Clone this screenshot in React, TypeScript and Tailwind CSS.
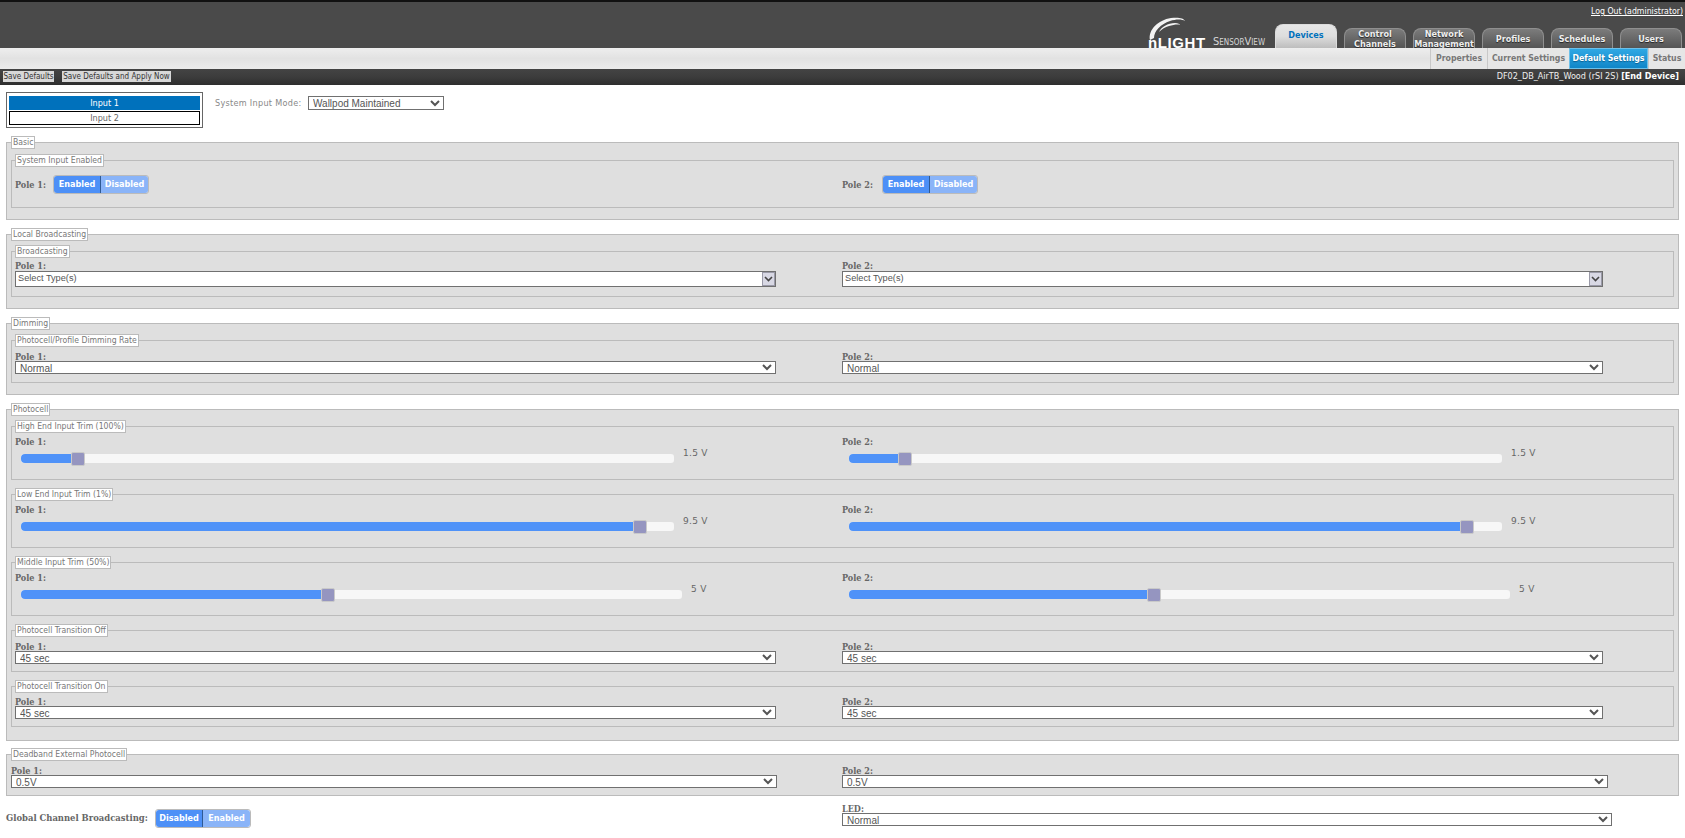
import type { ReactNode } from "react";

const serif = "[font-family:'DejaVu_Serif_Condensed','DejaVu_Serif',serif]";
const arial = "[font-family:'Liberation_Sans',Arial,sans-serif]";

const TABS = [
  { label: "Devices", active: true },
  { label: "Control Channels" },
  { label: "Network Management" },
  { label: "Profiles" },
  { label: "Schedules" },
  { label: "Users" },
];

const SUB_TABS = [
  { label: "Properties", width: 57 },
  { label: "Current Settings", width: 82 },
  { label: "Default Settings", width: 79, active: true },
  { label: "Status", width: 37 },
];

function Logo() {
  return (
    <div className="relative w-[117px] h-[31px] mr-[11px] self-end">
      <svg className="absolute left-0 top-0" width="42" height="24" viewBox="0 0 42 24" fill="none">
        <path d="M3 23C1 13 11 3 24 1c7-1 13 0 14 3-3-2-9-2-15 0C14 7 7 14 7 21z" fill="#f2f2f2" />
        <path d="M12 15c2-5 9-9 16-9 3 0 5 1 5 2-2-1-7 0-11 1-4 1-7 3-10 6z" fill="#f2f2f2" />
      </svg>
      <span className={`${arial} absolute left-[1px] bottom-[-2px] text-[15px] leading-[15px] font-bold text-white tracking-[0.6px]`}>nLIGHT</span>
      <span className="absolute left-[66px] bottom-[1px] text-[11px] leading-[10px] text-[#d6d6d6] [font-variant:small-caps]">SensorView</span>
    </div>
  );
}

function Header() {
  return (
    <header>
      <div className="h-[48px] border-t-2 border-[#111] bg-[#4a4a4a] flex flex-col justify-between">
        <div className="pt-[4px] pr-[2px] text-right text-[8.7px] leading-[11px] text-white underline">Log Out (administrator)</div>
        <div className="flex justify-end items-end pr-[3px]">
          <Logo />
          <nav className="flex items-end gap-[7px]">
            {TABS.map((tab) => (
              <div
                key={tab.label}
                className={
                  tab.active
                    ? "w-[62px] h-[24px] rounded-t-[8px] border border-b-0 border-[#dcdcdc] bg-gradient-to-b from-[#e6e6e6] via-[#dddddd] to-[#bdbdbd] text-[#0071bc] text-[9px] leading-[20px] font-bold text-center"
                    : "w-[62px] h-[20px] rounded-t-[8px] border border-b-0 border-[#8f8f8f] bg-gradient-to-b from-[#7c7c7c] to-[#555555] text-[#eeeeee] text-[9px] leading-[10px] font-bold text-center flex items-center justify-center overflow-hidden [text-shadow:0_1px_1px_#222]"
                }
              >
                {tab.label}
              </div>
            ))}
          </nav>
        </div>
      </div>
      <div className="h-[21px] flex justify-end bg-gradient-to-b from-[#eeeeee] via-[#e2e2e2] to-[#ececec]">
        {SUB_TABS.map((tab) => (
          <div
            key={tab.label}
            style={{ width: tab.width }}
            className={
              tab.active
                ? "h-full text-center text-[8.7px] leading-[19px] font-bold whitespace-nowrap text-white bg-gradient-to-b from-[#2fa8e4] to-[#0f86c8] border border-[#6cc0ea] [text-shadow:0_1px_1px_#0b5f90]"
                : "h-full text-center text-[8.7px] leading-[21px] font-bold whitespace-nowrap text-[#777777] bg-[#e6e6e6] border-l border-[#c8c8c8]"
            }
          >
            {tab.label}
          </div>
        ))}
      </div>
      <div className="h-[16px] flex justify-between items-start bg-gradient-to-b from-[#444444] via-[#3c3c3c] to-[#2e2e2e] pl-[3px] pr-[6px]">
        <div className="flex gap-[8px] pt-[2px]">
          <button className="h-[11px] w-[51px] bg-[#d8d8d8] text-[#333333] text-[8px] leading-[11px] whitespace-nowrap">Save Defaults</button>
          <button className="h-[11px] w-[109px] bg-[#d8d8d8] text-[#333333] text-[8px] leading-[11px] whitespace-nowrap">Save Defaults and Apply Now</button>
        </div>
        <div className="pt-[1px] text-[9px] leading-[12px] text-[#eeeeee]">
          DF02_DB_AirTB_Wood (rSI 2S) <span className="font-bold text-white">[End Device]</span>
        </div>
      </div>
    </header>
  );
}

function Legend({ children }: { children: ReactNode }) {
  return (
    <legend className="h-[13px] px-[1px] bg-white border border-[#bbbbbb] text-[8.6px] leading-[11px] text-[#777777] whitespace-nowrap">
      {children}
    </legend>
  );
}

function Section({ title, className, children }: { title: string; className: string; children: ReactNode }) {
  return (
    <fieldset className={`mx-[6px] px-[4px] border border-[#bbbbbb] bg-[#dfdfdf] ${className}`}>
      <Legend>{title}</Legend>
      {children}
    </fieldset>
  );
}

function Group({ title, className, children }: { title: string; className: string; children: ReactNode }) {
  return (
    <fieldset className={`px-[3px] border border-[#bbbbbb] ${className}`}>
      <Legend>{title}</Legend>
      {children}
    </fieldset>
  );
}

function Pole({ n, className = "" }: { n: number; className?: string }) {
  return <div className={`${serif} text-[9px] leading-[10px] font-bold text-[#666666] ${className}`}>Pole {n}:</div>;
}

function Toggle({ on, off, className = "" }: { on: string; off: string; className?: string }) {
  return (
    <div className={`flex h-[19px] rounded-[3px] border border-[#bbbbbb] text-[9px] leading-[17px] font-bold text-white text-center ${className}`}>
      <div className="w-[47px] rounded-l-[3px] bg-[#4d90f7] border-r border-[#2f5a94]">{on}</div>
      <div className="w-[47px] rounded-r-[3px] bg-[#8ab4f8]">{off}</div>
    </div>
  );
}

function Select({ value, className }: { value: string; className: string }) {
  return (
    <select defaultValue={value} className={`${arial} block h-[13px] -mt-[1px] border border-[#707070] bg-white text-[10px] text-[#555555] ${className}`}>
      <option>{value}</option>
    </select>
  );
}

function TypeSelect({ className }: { className: string }) {
  return (
    <div className={`${arial} relative h-[16px] border border-[#707070] bg-white pl-[2px] text-[9.2px] leading-[13px] text-[#555555] ${className}`}>
      Select Type(s)
      <span className="absolute right-0 top-0 h-[14px] w-[13px] border border-[#9a9aa8] bg-[#d8d8e4] flex items-center justify-center">
        <svg width="9" height="6" viewBox="0 0 9 6" fill="none">
          <path d="M1 1l3.5 3.5L8 1" stroke="#444" strokeWidth="1.6" />
        </svg>
      </span>
    </div>
  );
}

function Slider({ track, fill, label, inset }: { track: number; fill: number; label: string; inset: number }) {
  return (
    <div style={{ paddingLeft: inset }} className="flex mt-[7px]">
      <div style={{ width: track }} className="relative h-[9px] rounded-[3px] bg-[#f7f7f7]">
        <div style={{ width: fill }} className="h-full rounded-l-[4px] bg-[#4f92f8]" />
        <div style={{ left: fill - 7 }} className="absolute top-[-2px] h-[14px] w-[14px] rounded-[2px] border border-[#c9c9c9] bg-[#9595c0]" />
      </div>
      <div className="ml-[9px] -mt-[7px] text-[9px] leading-[12px] tracking-[0.3px] text-[#666666] [font-family:'DejaVu_Sans',sans-serif]">{label}</div>
    </div>
  );
}

function SliderGroup({ title, className, track, fills, label }: { title: string; className: string; track: number; fills: number[]; label: string }) {
  return (
    <Group title={title} className={`h-[60px] ${className}`}>
      <div className="flex pt-[4px]">
        <div className="w-[827px]">
          <Pole n={1} />
          <Slider track={track} fill={fills[0]} label={label} inset={6} />
        </div>
        <div>
          <Pole n={2} />
          <Slider track={track} fill={fills[1]} label={label} inset={7} />
        </div>
      </div>
    </Group>
  );
}

function SelectRow({ value, pt }: { value: string; pt: string }) {
  return (
    <div className={`flex ${pt}`}>
      <div className="w-[827px]">
        <Pole n={1} />
        <Select value={value} className="w-[761px]" />
      </div>
      <div>
        <Pole n={2} />
        <Select value={value} className="w-[761px]" />
      </div>
    </div>
  );
}

export default function App() {
  return (
    <div className="h-[838px] overflow-hidden bg-white text-[#555555] [font-family:'DejaVu_Sans_Condensed','DejaVu_Sans',sans-serif]">
      <Header />

      <div className="flex pt-[7px] pl-[6px] h-[51px]">
        <div className="w-[197px] h-[36px] border border-[#666666] px-[2px] pt-[3px] flex flex-col gap-[1px] text-[9px] text-center">
          <div className="h-[14px] leading-[14px] bg-[#0071bc] text-white">Input 1</div>
          <div className="h-[14px] leading-[12px] bg-white border border-black text-[#666666]">Input 2</div>
        </div>
        <div className="flex items-start ml-[12px] pt-[4px]">
          <span className="w-[93px] text-[9px] leading-[14px] text-[#888888] tracking-[0.3px]">System Input Mode:</span>
          <Select value="Wallpod Maintained" className="w-[136px] !h-[14px] !mt-0" />
        </div>
      </div>

      <div className="flex flex-col gap-[8px]">
        <Section title="Basic" className="h-[84px]">
          <Group title="System Input Enabled" className="mt-[5px] h-[54px]">
            <div className="flex pt-[8px]">
              <div className="w-[827px] flex items-center">
                <Pole n={1} className="w-[38px]" />
                <Toggle on="Enabled" off="Disabled" />
              </div>
              <div className="flex items-center">
                <Pole n={2} className="w-[40px]" />
                <Toggle on="Enabled" off="Disabled" />
              </div>
            </div>
          </Group>
        </Section>

        <Section title="Local Broadcasting" className="h-[81px]">
          <Group title="Broadcasting" className="mt-[4px] h-[52px]">
            <div className="flex pt-[3px]">
              <div className="w-[827px]">
                <Pole n={1} />
                <TypeSelect className="w-[761px]" />
              </div>
              <div>
                <Pole n={2} />
                <TypeSelect className="w-[761px]" />
              </div>
            </div>
          </Group>
        </Section>

        <Section title="Dimming" className="h-[78px]">
          <Group title="Photocell/Profile Dimming Rate" className="mt-[4px] h-[49px]">
            <SelectRow value="Normal" pt="pt-[5px]" />
          </Group>
        </Section>

        <Section title="Photocell" className="h-[338px]">
          <SliderGroup title="High End Input Trim (100%)" className="mt-[4px]" track={653} fills={[57, 56]} label="1.5 V" />
          <SliderGroup title="Low End Input Trim (1%)" className="mt-[8px]" track={653} fills={[619, 618]} label="9.5 V" />
          <SliderGroup title="Middle Input Trim (50%)" className="mt-[8px]" track={661} fills={[307, 305]} label="5 V" />
          <Group title="Photocell Transition Off" className="mt-[8px] h-[48px]">
            <SelectRow value="45 sec" pt="pt-[5px]" />
          </Group>
          <Group title="Photocell Transition On" className="mt-[8px] h-[47px]">
            <SelectRow value="45 sec" pt="pt-[4px]" />
          </Group>
        </Section>

        <Section title="Deadband External Photocell" className="h-[48px] !-mt-[1px]">
          <div className="flex pt-[5px]">
            <div className="w-[831px]">
              <Pole n={1} />
              <Select value="0.5V" className="w-[766px]" />
            </div>
            <div>
              <Pole n={2} />
              <Select value="0.5V" className="w-[766px]" />
            </div>
          </div>
        </Section>
      </div>

      <div className="flex pl-[6px] pt-[8px]">
        <div className="w-[836px] flex items-start pt-[5px]">
          <span className={`${serif} w-[149px] text-[9.4px] leading-[18px] font-bold text-[#666666]`}>Global Channel Broadcasting:</span>
          <Toggle on="Disabled" off="Enabled" />
        </div>
        <div>
          <div className={`${serif} text-[9px] leading-[10px] font-bold text-[#666666]`}>LED:</div>
          <Select value="Normal" className="w-[770px]" />
        </div>
      </div>
    </div>
  );
}
